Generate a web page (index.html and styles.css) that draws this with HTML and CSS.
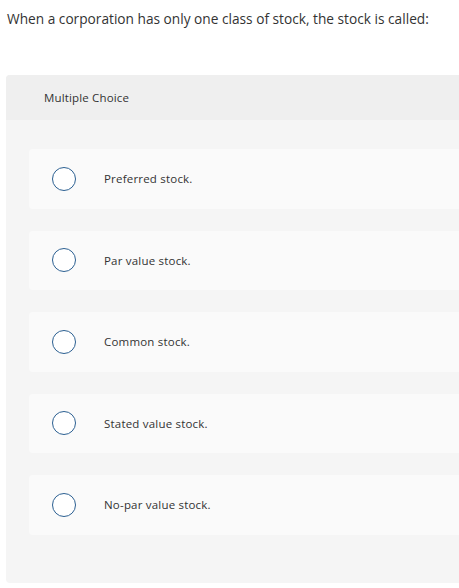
FILE: index.html
```html
<!DOCTYPE html>
<html lang="en">
<head>
<meta charset="utf-8">
<title>Multiple Choice</title>
<link rel="stylesheet" href="styles.css">
</head>
<body>
<p class="question">When a corporation has only one class of stock, the stock is called:</p>
<section class="panel">
  <header class="panel-head">Multiple Choice</header>
  <ul class="options">
    <li class="option"><span class="radio"></span><span class="label">Preferred stock.</span></li>
    <li class="option"><span class="radio"></span><span class="label">Par value stock.</span></li>
    <li class="option"><span class="radio"></span><span class="label">Common stock.</span></li>
    <li class="option"><span class="radio"></span><span class="label">Stated value stock.</span></li>
    <li class="option"><span class="radio"></span><span class="label">No-par value stock.</span></li>
  </ul>
</section>
</body>
</html>
```
FILE: styles.css
```css
html, body {
  margin: 0;
  padding: 0;
  background: #ffffff;
  overflow: hidden;
}
body {
  font-family: "Open Sans", "Liberation Sans", sans-serif;
  color: #333333;
}
.question {
  margin: 0;
  padding: 10px 0 0 7px;
  font-size: 13.7px;
  line-height: 18px;
  height: 75px;
  box-sizing: border-box;
}
.panel {
  margin-left: 6px;
  background: #f5f5f5;
  border-radius: 4px 0 0 4px;
  height: 508px;
}
.panel-head {
  height: 45px;
  background: #efefef;
  border-radius: 4px 0 0 0;
  padding-left: 38px;
  display: flex;
  align-items: center;
  font-size: 11.5px;
  letter-spacing: 0.15px;
  color: #333333;
}
.options {
  list-style: none;
  margin: 0;
  padding: 29px 0 0 23px;
  display: flex;
  flex-direction: column;
  gap: 22px;
}
.option {
  height: 59.5px;
  background: #fafafa;
  border-radius: 4px 0 0 4px;
  display: flex;
  align-items: center;
  padding-left: 23px;
}
.radio {
  width: 22px;
  height: 22px;
  border: 1.5px solid #2b5f91;
  border-radius: 50%;
  background: #ffffff;
  flex: none;
}
.label {
  margin-left: 28px;
  font-size: 11.5px;
  letter-spacing: 0.2px;
  color: #333333;
}
```
